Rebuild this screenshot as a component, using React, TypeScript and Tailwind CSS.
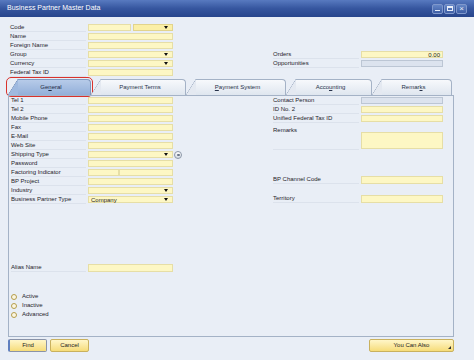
import type { ReactNode } from "react"

type Tone = "yellow" | "gray" | "gold"

const TONES: Record<Tone, string> = {
  yellow: "border-[#e6dea6] bg-[#fdf7c4]",
  gray: "border-[#bcc6d4] bg-[#dce3ee]",
  gold: "border-[#e2d48c] bg-[#fbefa6]",
}

function Arrow() {
  return <span className="ml-auto mr-[2px] h-0 w-0 border-x-[2px] border-t-[3px] border-x-transparent border-t-[#111]" />
}

type FieldProps = {
  w?: string
  h?: string
  tone?: Tone
  arrow?: boolean
  children?: ReactNode
}

function Field({ w = "w-[85px]", h = "h-[7px]", tone = "yellow", arrow, children }: FieldProps) {
  return (
    <div className={`${w} ${h} ${TONES[tone]} flex shrink-0 items-center border px-[2px] text-[6px] leading-none text-[#1c1c1c]`}>
      {children}
      {arrow && <Arrow />}
    </div>
  )
}

type RowProps = {
  label: string
  lw?: string
  children?: ReactNode
}

function Row({ label, lw = "w-[76px]", children }: RowProps) {
  return (
    <div className="flex h-[9px] items-center">
      <div className={`${lw} mr-[2px] h-full shrink-0 whitespace-nowrap border-b border-[#dce2ec] text-[6px] leading-[8px] text-[#1e232b]`}>
        {label}
      </div>
      {children}
    </div>
  )
}

type TabProps = {
  w: string
  active?: boolean
  children: ReactNode
}

function Tab({ w, active, children }: TabProps) {
  return (
    <div className={`${w} flex h-[16px] ${active ? "rounded-[3px] outline-[1.5px] outline-solid outline-offset-[1px] outline-[#d9322c]" : ""}`}>
      <div
        className={`h-full w-[10px] shrink-0 ${
          active
            ? "bg-[linear-gradient(to_top_left,#9fb9df_calc(50%_-_0.5px),#7f97bd_50%,transparent_calc(50%_+_0.5px))]"
            : "bg-[linear-gradient(to_top_left,#e4e9f1_calc(50%_-_0.5px),#a4b2c6_50%,transparent_calc(50%_+_0.5px))]"
        }`}
      />
      <div
        className={`flex flex-1 items-center justify-center rounded-tr-[4px] border-r border-t pr-[6px] text-[6px] ${
          active
            ? "border-[#7f97bd] bg-linear-to-b from-[#b7cbe9] to-[#92afd9] text-[#1d2a44]"
            : "border-[#a4b2c6] bg-linear-to-b from-[#f7f9fc] to-[#dfe6ef] text-[#27324a]"
        }`}
      >
        {children}
      </div>
    </div>
  )
}

function Radio({ label }: { label: string }) {
  return (
    <div className="flex h-[9px] items-center">
      <span className="h-[6px] w-[6px] rounded-full border border-[#b59d4c] bg-[#fbf6e2]" />
      <span className="ml-[5px] text-[6px] text-[#1e232b]">{label}</span>
    </div>
  )
}

function WinButton({ children }: { children: ReactNode }) {
  return (
    <div className="flex h-[10px] w-[11px] items-center justify-center rounded-[2px] border border-[#7f98cc] bg-linear-to-b from-[#6586c6] to-[#3e5ea5] text-[8px] leading-none text-[#e8eefa]">
      {children}
    </div>
  )
}

export default function App() {
  return (
    <div className="flex h-[360px] w-[474px] flex-col overflow-hidden bg-[#e9eef6] font-['Liberation_Sans',Arial,sans-serif]">
      {/* title bar */}
      <div className="flex h-[17px] shrink-0 items-center bg-linear-to-b from-[#587ac0] via-[#36569f] to-[#27458c] pl-[7px] pr-[7px]">
        <span className="text-[7px] text-white">Business Partner Master Data</span>
        <div className="ml-auto flex gap-[1px]">
          <WinButton>
            <span className="mt-[4px] h-[1.5px] w-[5px] bg-[#e8eefa]" />
          </WinButton>
          <WinButton>
            <span className="h-[5px] w-[6px] border border-t-2 border-[#e8eefa]" />
          </WinButton>
          <WinButton>×</WinButton>
        </div>
      </div>

      {/* header fields */}
      <div className="flex pl-[10px] pt-[6px]">
        <div className="flex flex-col">
          <Row label="Code">
            <Field w="w-[43px]" />
            <div className="ml-[2px]">
              <Field w="w-[40px]" tone="gold" arrow />
            </div>
          </Row>
          <Row label="Name">
            <Field />
          </Row>
          <Row label="Foreign Name">
            <Field />
          </Row>
          <Row label="Group">
            <Field arrow />
          </Row>
          <Row label="Currency">
            <Field arrow />
          </Row>
          <Row label="Federal Tax ID">
            <Field />
          </Row>
        </div>
        <div className="ml-[100px] flex flex-col pt-[27px]">
          <Row label="Orders" lw="w-[86px]">
            <Field w="w-[82px]">
              <span className="ml-auto">0.00</span>
            </Field>
          </Row>
          <Row label="Opportunities" lw="w-[86px]">
            <Field w="w-[82px]" tone="gray" />
          </Row>
        </div>
      </div>

      {/* tabs */}
      <div className="ml-[8px] mt-[2px] flex">
        <Tab w="w-[83px]" active>
          Ge<u>n</u>eral
        </Tab>
        <Tab w="w-[95px]">Payment Terms</Tab>
        <Tab w="w-[100px]">
          <u>P</u>ayment System
        </Tab>
        <Tab w="w-[86px]">
          Acco<u>u</u>nting
        </Tab>
        <Tab w="w-[80px]">
          Remar<u>k</u>s
        </Tab>
      </div>

      {/* tab panel */}
      <div className="ml-[8px] flex h-[242px] w-[446px] shrink-0 border border-[#a4b2c6] pl-[2px]">
        <div className="flex w-[162px] shrink-0 flex-col">
          <Row label="Tel 1" lw="w-[75px]">
            <Field />
          </Row>
          <Row label="Tel 2" lw="w-[75px]">
            <Field />
          </Row>
          <Row label="Mobile Phone" lw="w-[75px]">
            <Field />
          </Row>
          <Row label="Fax" lw="w-[75px]">
            <Field />
          </Row>
          <Row label="E-Mail" lw="w-[75px]">
            <Field />
          </Row>
          <Row label="Web Site" lw="w-[75px]">
            <Field />
          </Row>
          <Row label="Shipping Type" lw="w-[75px]">
            <Field arrow />
            <span className="ml-[1px] flex h-[8px] w-[8px] shrink-0 items-center justify-center rounded-full border border-[#8c97a8] bg-linear-to-b from-white to-[#d3dae4]">
              <span className="h-[2px] w-[3px] rounded-[1px] bg-[#6b7689]" />
            </span>
          </Row>
          <Row label="Password" lw="w-[75px]">
            <Field />
          </Row>
          <Row label="Factoring Indicator" lw="w-[75px]">
            <Field w="w-[31px]" />
            <Field w="w-[54px]" />
          </Row>
          <Row label="BP Project" lw="w-[75px]">
            <Field />
          </Row>
          <Row label="Industry" lw="w-[75px]">
            <Field arrow />
          </Row>
          <Row label="Business Partner Type" lw="w-[75px]">
            <Field arrow>Company</Field>
          </Row>

          <div className="mt-[59px]">
            <Row label="Alias Name" lw="w-[75px]">
              <Field h="h-[8px]" />
            </Row>
          </div>

          <div className="mt-[20px] flex flex-col">
            <Radio label="Active" />
            <Radio label="Inactive" />
            <Radio label="Advanced" />
          </div>
        </div>

        <div className="ml-[100px] flex flex-col">
          <Row label="Contact Person" lw="w-[86px]">
            <Field w="w-[82px]" tone="gray" />
          </Row>
          <Row label="ID No. 2" lw="w-[86px]">
            <Field w="w-[82px]" />
          </Row>
          <Row label="Unified Federal Tax ID" lw="w-[86px]">
            <Field w="w-[82px]" />
          </Row>

          <div className="mt-[2px] flex h-[25px] items-end">
            <div className="mr-[2px] h-full w-[86px] border-b border-[#dce2ec] pt-[1px] text-[6px] text-[#1e232b]">Remarks</div>
            <div className="mb-[1px]">
              <Field w="w-[82px]" h="h-[17px]" />
            </div>
          </div>

          <div className="mt-[25px]">
            <Row label="BP Channel Code" lw="w-[86px]">
              <Field w="w-[82px]" h="h-[8px]" />
            </Row>
          </div>
          <div className="mt-[10px]">
            <Row label="Territory" lw="w-[86px]">
              <Field w="w-[82px]" h="h-[8px]" />
            </Row>
          </div>
        </div>
      </div>

      {/* footer buttons */}
      <div className="ml-[8px] mt-[2px] flex h-[13px] w-[446px] items-center">
        <button className="flex h-[13px] w-[39px] items-center justify-center rounded-[2px] border border-[#8a93a8] border-l-2 border-l-[#5f7fbf] bg-linear-to-b from-[#fff6c8] to-[#f6dc78] text-[6px] text-[#1c1c1c]">
          Find
        </button>
        <button className="ml-[3px] flex h-[13px] w-[39px] items-center justify-center rounded-[2px] border border-[#c9b15e] bg-linear-to-b from-[#fff6c8] to-[#f6dc78] text-[6px] text-[#1c1c1c]">
          Cancel
        </button>
        <button className="relative ml-auto flex h-[13px] w-[85px] items-center justify-center rounded-[2px] border border-[#c9b15e] bg-linear-to-b from-[#fff6c8] to-[#f6dc78] text-[6px] text-[#1c1c1c]">
          You Can Also
          <span className="absolute bottom-[2px] right-[2px] h-0 w-0 border-b-[3px] border-l-[3px] border-b-[#333] border-l-transparent" />
        </button>
      </div>
    </div>
  )
}
